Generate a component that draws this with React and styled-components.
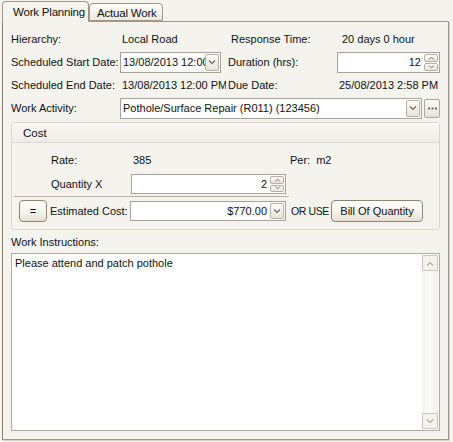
import React from 'react';
import styled, { createGlobalStyle } from 'styled-components';

const Global = createGlobalStyle`
  html, body { margin: 0; padding: 0; background: #f5f3ee; }
  body { font-family: "Liberation Sans", Arial, sans-serif; font-size: 11px; color: #111; }
  * { box-sizing: border-box; }
`;

const Window = styled.div`
  width: 453px;
  height: 442px;
  padding: 1px 4px 2px 2px;
  display: flex;
  flex-direction: column;
`;

const TabStrip = styled.div`
  display: flex;
  align-items: flex-end;
  height: 21px;
  margin-bottom: -1px;
  position: relative;
  z-index: 1;
`;

const Tab = styled.div`
  height: ${p => (p.$active ? '21px' : '18px')};
  margin-bottom: ${p => (p.$active ? '0' : '1px')};
  width: ${p => p.$w}px;
  padding-left: ${p => p.$pad}px;
  display: flex;
  align-items: center;
  white-space: nowrap;
  border: 1px solid #a39584;
  border-bottom: ${p => (p.$active ? 'none' : '1px solid #a39584')};
  border-radius: 4px 4px 0 0;
  background: ${p => (p.$active ? '#f5f3ee' : 'linear-gradient(#fdfdfb, #ece8dd)')};
  padding-top: ${p => (p.$active ? '0' : '1px')};
  color: #111;
  font-size: 11.5px;
  letter-spacing: -0.2px;
`;

const Panel = styled.div`
  flex: 1;
  display: flex;
  flex-direction: column;
  border: 1px solid #a39584;
  border-left-color: #8f7c6c;
  box-shadow: 1px 1px 0 #d8d2c6;
  background: #f5f3ee;
  padding: 6px 8px 8px 8px;
`;

const FormGrid = styled.div`
  display: grid;
  grid-template-columns: 109px 106px 111px 103px;
  grid-auto-rows: 22px;
  row-gap: 1px;
  align-items: center;
`;

const Label = styled.div`
  padding-left: ${p => p.$indent || 0}px;
  white-space: nowrap;
  overflow: hidden;
`;

const Value = styled.div`
  padding-left: ${p => p.$indent || 0}px;
  white-space: nowrap;
  overflow: hidden;
`;

const Field = styled.div`
  display: flex;
  align-items: center;
  height: ${p => p.$h || 21}px;
  width: ${p => (p.$w ? `${p.$w}px` : '100%')};
  flex: ${p => (p.$grow ? 1 : 'none')};
  margin-left: ${p => p.$ml || 0}px;
  background: #fff;
  border: 1px solid #aaa296;
  padding: 1px;
`;

const FieldText = styled.span`
  flex: 1;
  overflow: hidden;
  white-space: nowrap;
  padding: 0 ${p => (p.$right ? 3 : 1)}px 0 1px;
  text-align: ${p => (p.$right ? 'right' : 'left')};
`;

const SmallBtn = styled.div`
  width: ${p => p.$w || 14}px;
  height: 100%;
  flex: none;
  display: flex;
  align-items: center;
  justify-content: center;
  border: 1px solid #b9ae9f;
  border-radius: 2px;
  background: linear-gradient(#fcfbf8, #e8e3d8);
`;

const Spinner = styled.div`
  width: 14px;
  height: 100%;
  flex: none;
  display: flex;
  flex-direction: column;
  gap: 1px;
`;

const SpinHalf = styled.div`
  flex: 1;
  display: flex;
  align-items: center;
  justify-content: center;
  border: 1px solid #b9ae9f;
  border-radius: 2px;
  background: linear-gradient(#fcfbf8, #e8e3d8);
`;

const ActivityCell = styled.div`
  grid-column: 2 / span 3;
  display: flex;
  gap: 2px;
  align-items: center;
`;

const EllipsisBtn = styled.div`
  width: 16px;
  height: 19px;
  flex: none;
  display: flex;
  align-items: center;
  justify-content: center;
  border: 1px solid #b2a797;
  border-radius: 2px;
  background: linear-gradient(#fcfbf8, #e8e3d8);
`;

const CostGroup = styled.div`
  margin-top: 3px;
  border: 1px solid #dbd5ca;
  border-radius: 3px;
  display: flex;
  flex-direction: column;
`;

const CostHeader = styled.div`
  height: 20px;
  padding-left: 11px;
  display: flex;
  align-items: center;
  border-bottom: 1px solid #e0dbd1;
  background: linear-gradient(#f9f8f5, #efece5);
  font-size: 11.5px;
`;

const CostBody = styled.div`
  padding: 7px 0 7px 0;
  display: flex;
  flex-direction: column;
`;

const CostRow = styled.div`
  display: grid;
  grid-template-columns: 38px 80px 156px 1fr;
  align-items: center;
  height: ${p => p.$h}px;
  margin-top: ${p => p.$mt || 0}px;
`;

const Separator = styled.div`
  margin: 2px 0 3px 2px;
  width: 275px;
  height: 1px;
  background: #b8b0a4;
`;

const PushButton = styled.div`
  height: 22px;
  width: ${p => p.$w}px;
  margin-left: ${p => p.$ml || 0}px;
  flex: none;
  display: flex;
  align-items: center;
  justify-content: center;
  white-space: nowrap;
  border: 1px solid #928371;
  border-radius: 4px;
  background: linear-gradient(#fefefc, #f4f1ea 60%, #e4dfd3);
  font-size: 11px;
  color: #111;
`;

const Rest = styled.div`
  display: flex;
  align-items: center;
  padding-left: ${p => p.$indent || 0}px;
  gap: ${p => p.$gap || 0}px;
  white-space: nowrap;
`;

const OrUse = styled.span`
  width: 40px;
  flex: none;
  font-size: 10.5px;
  letter-spacing: -0.4px;
`;

const InstrLabel = styled.div`
  height: 23px;
  display: flex;
  align-items: center;
  padding-top: 1px;
`;

const TextArea = styled.div`
  flex: 1;
  display: flex;
  border: 1px solid #b2aa9f;
  background: #fff;
`;

const AreaText = styled.div`
  flex: 1;
  padding: 3px 3px;
`;

const ScrollBar = styled.div`
  width: 16px;
  margin: 1px 1px 1px 0;
  display: flex;
  flex-direction: column;
  justify-content: space-between;
  background: linear-gradient(90deg, #f4f3ef, #fbfaf8 50%, #f1efea);
`;

const ScrollBtn = styled.div`
  height: 16px;
  display: flex;
  align-items: center;
  justify-content: center;
  border: 1px solid #cdc6ba;
  border-radius: 1px;
  background: #f3f1ec;
`;

const Chevron = ({ up, color = '#6f675c', size = 8 }) => (
  <svg width={size} height={Math.round(size * 0.6)} viewBox="0 0 8 5">
    <polyline
      points={up ? '1,4.5 4,1.5 7,4.5' : '1,0.5 4,3.5 7,0.5'}
      fill="none"
      stroke={color}
      strokeWidth="1.2"
    />
  </svg>
);

const DropDown = () => (
  <SmallBtn>
    <Chevron />
  </SmallBtn>
);

const Spin = () => (
  <Spinner>
    <SpinHalf><Chevron up size={7} /></SpinHalf>
    <SpinHalf><Chevron size={7} /></SpinHalf>
  </Spinner>
);

const Dots = () => (
  <svg width="11" height="3" viewBox="0 0 11 3">
    <rect x="1" y="0.5" width="2" height="2" fill="#6f675c" />
    <rect x="4.5" y="0.5" width="2" height="2" fill="#6f675c" />
    <rect x="8" y="0.5" width="2" height="2" fill="#6f675c" />
  </svg>
);

export default function App() {
  return (
    <>
      <Global />
      <Window>
        <TabStrip>
          <Tab $active $w={87} $pad={10}>Work Planning</Tab>
          <Tab $w={74} $pad={7}>Actual Work</Tab>
        </TabStrip>
        <Panel>
          <FormGrid>
            <Label>Hierarchy:</Label>
            <Value $indent={2}>Local Road</Value>
            <Label $indent={5}>Response Time:</Label>
            <Value $indent={5}>20 days 0 hour</Value>

            <Label>Scheduled Start Date:</Label>
            <Field $w={101}>
              <FieldText>13/08/2013 12:00 PM</FieldText>
              <DropDown />
            </Field>
            <Label $indent={2}>Duration (hrs):</Label>
            <Field>
              <FieldText $right>12</FieldText>
              <Spin />
            </Field>

            <Label>Scheduled End Date:</Label>
            <Value $indent={2}>13/08/2013 12:00 PM</Value>
            <Label $indent={2}>Due Date:</Label>
            <Value $indent={2}>25/08/2013 2:58 PM</Value>

            <Label>Work Activity:</Label>
            <ActivityCell>
              <Field $grow>
                <FieldText>Pothole/Surface Repair (R011) (123456)</FieldText>
                <DropDown />
              </Field>
              <EllipsisBtn><Dots /></EllipsisBtn>
            </ActivityCell>
          </FormGrid>

          <CostGroup>
            <CostHeader>Cost</CostHeader>
            <CostBody>
              <CostRow $h={20}>
                <span />
                <Label $indent={1}>Rate:</Label>
                <Value $indent={3}>385</Value>
                <Rest $indent={4} $gap={6}>
                  <span>Per:</span>
                  <span>m2</span>
                </Rest>
              </CostRow>
              <CostRow $h={20} $mt={4}>
                <span />
                <Label $indent={1}>Quantity X</Label>
                <Field $h={20} $w={155} $ml={1}>
                  <FieldText $right>2</FieldText>
                  <Spin />
                </Field>
                <span />
              </CostRow>
              <Separator />
              <CostRow $h={22}>
                <PushButton $w={28} $ml={7}>=</PushButton>
                <Label>Estimated Cost:</Label>
                <Field $h={20} $w={156}>
                  <FieldText $right>$770.00</FieldText>
                  <DropDown />
                </Field>
                <Rest $indent={5}>
                  <OrUse>OR USE</OrUse>
                  <PushButton $w={92}>Bill Of Quantity</PushButton>
                </Rest>
              </CostRow>
            </CostBody>
          </CostGroup>

          <InstrLabel>Work Instructions:</InstrLabel>
          <TextArea>
            <AreaText>Please attend and patch pothole</AreaText>
            <ScrollBar>
              <ScrollBtn><Chevron up color="#b3aba0" /></ScrollBtn>
              <ScrollBtn><Chevron color="#b3aba0" /></ScrollBtn>
            </ScrollBar>
          </TextArea>
        </Panel>
      </Window>
    </>
  );
}
